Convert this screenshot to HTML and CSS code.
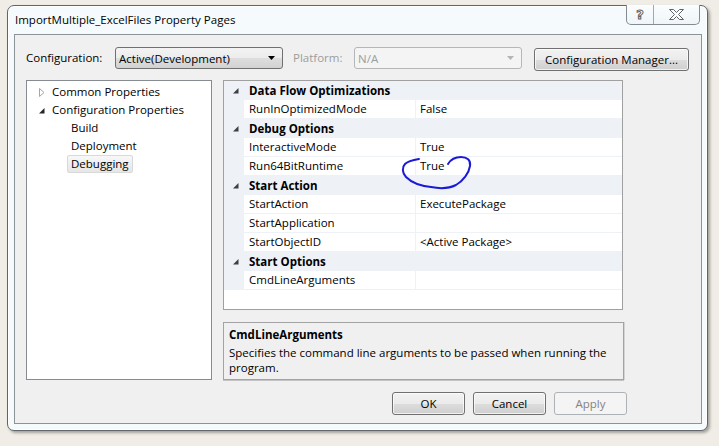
FILE: index.html
```html
<!DOCTYPE html>
<html lang="en">
<head>
<meta charset="utf-8">
<title>ImportMultiple_ExcelFiles Property Pages</title>
<link rel="stylesheet" href="styles.css">
</head>
<body>
<div class="window">
  <div class="titlebar">
    <span class="title">ImportMultiple_ExcelFiles Property Pages</span>
    <div class="caption-btns">
      <div class="cap cap-help"><span class="help-glyph">?</span></div>
      <div class="cap cap-close">
        <svg width="15" height="11" viewBox="0 0 15 11">
          <polygon points="0.5,0.5 4.5,0.5 7.5,3.5 10.5,0.5 14.5,0.5 9.5,5.5 14.5,10.5 10.5,10.5 7.5,7.5 4.5,10.5 0.5,10.5 5.5,5.5" fill="#fff" stroke="#5f6368" stroke-width="1"/>
        </svg>
      </div>
    </div>
  </div>

  <div class="client">
    <div class="toolbar">
      <span class="lbl lbl-config">Configuration:</span>
      <div class="combo">
        <span class="combo-text">Active(Development)</span>
        <svg class="combo-arrow" width="7" height="4" viewBox="0 0 7 4"><polygon points="0,0 7,0 3.5,4" fill="#000"/></svg>
      </div>
      <span class="lbl lbl-platform is-disabled">Platform:</span>
      <div class="combo is-disabled">
        <span class="combo-text">N/A</span>
        <svg class="combo-arrow" width="7" height="4" viewBox="0 0 7 4"><polygon points="0,0 7,0 3.5,4" fill="#b4b4b4"/></svg>
      </div>
      <button class="btn btn-cfgmgr">Configuration Manager...</button>
    </div>

    <div class="main">
      <div class="tree">
        <div class="tree-row">
          <svg class="twisty" width="6" height="9" viewBox="0 0 6 9"><polygon points="0.5,0.5 5,4.5 0.5,8.5" fill="#fff" stroke="#a6a6a6"/></svg>
          <span class="tree-label">Common Properties</span>
        </div>
        <div class="tree-row">
          <svg class="twisty" width="6" height="9" viewBox="0 0 6 9"><polygon points="5.5,2 5.5,7.5 0,7.5" fill="#262626"/></svg>
          <span class="tree-label">Configuration Properties</span>
        </div>
        <div class="tree-row child"><span class="tree-label">Build</span></div>
        <div class="tree-row child"><span class="tree-label">Deployment</span></div>
        <div class="tree-row child"><span class="tree-label is-selected">Debugging</span></div>
      </div>

      <div class="right-col">
        <div class="propgrid">
          <div class="cat-row"><svg class="cat-twisty" width="6" height="6" viewBox="0 0 6 6"><polygon points="5.5,0 5.5,5.5 0,5.5" fill="#3f3f3f"/></svg><span class="cat-name">Data Flow Optimizations</span></div>
          <div class="prop-row"><span class="gutter"></span><span class="pname">RunInOptimizedMode</span><span class="pval">False</span></div>

          <div class="cat-row"><svg class="cat-twisty" width="6" height="6" viewBox="0 0 6 6"><polygon points="5.5,0 5.5,5.5 0,5.5" fill="#3f3f3f"/></svg><span class="cat-name">Debug Options</span></div>
          <div class="prop-row"><span class="gutter"></span><span class="pname">InteractiveMode</span><span class="pval">True</span></div>
          <div class="prop-row"><span class="gutter"></span><span class="pname">Run64BitRuntime</span><span class="pval">True</span></div>

          <div class="cat-row"><svg class="cat-twisty" width="6" height="6" viewBox="0 0 6 6"><polygon points="5.5,0 5.5,5.5 0,5.5" fill="#3f3f3f"/></svg><span class="cat-name">Start Action</span></div>
          <div class="prop-row"><span class="gutter"></span><span class="pname">StartAction</span><span class="pval">ExecutePackage</span></div>
          <div class="prop-row"><span class="gutter"></span><span class="pname">StartApplication</span><span class="pval"></span></div>
          <div class="prop-row"><span class="gutter"></span><span class="pname">StartObjectID</span><span class="pval">&lt;Active Package&gt;</span></div>

          <div class="cat-row"><svg class="cat-twisty" width="6" height="6" viewBox="0 0 6 6"><polygon points="5.5,0 5.5,5.5 0,5.5" fill="#3f3f3f"/></svg><span class="cat-name">Start Options</span></div>
          <div class="prop-row"><span class="gutter"></span><span class="pname">CmdLineArguments</span><span class="pval"></span></div>

          <!-- pen mark drawn around the Run64BitRuntime value -->
          <svg class="ink" width="400" height="230" viewBox="0 0 400 230">
            <path d="M224,83 C227,78 232,76 237,76 C243,76 247,79 246,85 C245,92 239,100 232,104 C226,107 217,108 207,106 C197,105 187,101 182,96 C178,92 178,86 181,83 C184,80 189,79 195,78" fill="none" stroke="#1b1bd6" stroke-width="2" stroke-linecap="round" stroke-linejoin="round"/>
          </svg>
        </div>

        <div class="desc">
          <div class="desc-title">CmdLineArguments</div>
          <div class="desc-text">Specifies the command line arguments to be passed when running the program.</div>
        </div>
      </div>
    </div>

    <div class="footer">
      <button class="btn">OK</button>
      <button class="btn">Cancel</button>
      <button class="btn is-disabled">Apply</button>
    </div>
  </div>
</div>
</body>
</html>
```

FILE: styles.css
```css
html, body {
  margin: 0;
  padding: 0;
}

body {
  width: 719px;
  height: 446px;
  overflow: hidden;
  background: #f0ede6;
  font-family: "Open Sans", "Noto Sans", "DejaVu Sans", sans-serif;
  font-size: 11px;
  color: #000;
}

/* ---- window frame ---- */
.window {
  box-sizing: border-box;
  margin: 5px 0 0 7px;
  width: 701px;
  height: 426px;
  padding: 0 5px 6px 6px;
  border: 1px solid #62666b;
  border-radius: 7px;
  background: #f5fbfd;
  box-shadow: inset 0 0 0 1px #ffffff, 2px 2px 3px rgba(0, 0, 0, 0.32);
  display: flex;
  flex-direction: column;
}

.titlebar {
  height: 28px;
  display: flex;
  align-items: flex-start;
  flex-shrink: 0;
}

.title {
  margin-left: 1px;
  line-height: 28px;
  font-size: 11.5px;
  flex: 1;
}

.caption-btns {
  display: flex;
  margin-top: -1px;
  margin-right: 2px;
  height: 20px;
  box-sizing: border-box;
  border: 1px solid #868b90;
  border-top: none;
  border-radius: 0 0 5px 5px;
  background: linear-gradient(#fbfdfe, #eef5f8);
}

.cap {
  display: flex;
  align-items: center;
  justify-content: center;
  height: 100%;
}

.cap-help {
  width: 26px;
  border-right: 1px solid #a3a8ad;
}

.cap-close {
  width: 45px;
}

.help-glyph {
  font-family: "DejaVu Sans", sans-serif;
  font-weight: bold;
  font-size: 13px;
  line-height: 13px;
  color: #fff;
  -webkit-text-stroke: 1px #5f6368;
  margin-top: -1px;
}

/* ---- client area ---- */
.client {
  box-sizing: border-box;
  height: 390px;
  border: 1px solid #8e9398;
  background: #f0f0f0;
  padding: 12px 0 0 11px;
  display: flex;
  flex-direction: column;
}

.toolbar {
  display: flex;
  align-items: flex-start;
  height: 24px;
}

.lbl {
  line-height: 22px;
  font-size: 11.5px;
}

.lbl-config {
  width: 89px;
}

.lbl-platform {
  width: 61px;
  margin-left: 10px;
}

.is-disabled {
  color: #9d9d9d;
}

.combo {
  box-sizing: border-box;
  width: 168px;
  height: 22px;
  border: 1px solid #707070;
  border-radius: 3px;
  background: linear-gradient(#f3f3f3 0%, #ececec 50%, #dedede 51%, #d2d2d2 100%);
  display: flex;
  align-items: center;
  padding: 0 6px 0 3px;
}

.combo.is-disabled {
  border-color: #b3b7ba;
  background: #f4f4f4;
}

.combo-text {
  flex: 1;
  font-size: 11.5px;
}

.combo-arrow {
  display: block;
  margin-right: 1px;
}

.btn {
  box-sizing: border-box;
  height: 23px;
  width: 73px;
  padding: 0;
  border: 1px solid #707070;
  border-radius: 3px;
  background: linear-gradient(#f2f2f2 0%, #ebebeb 50%, #dddddd 51%, #cfcfcf 100%);
  box-shadow: inset 0 0 0 1px rgba(255, 255, 255, 0.7);
  font-family: inherit;
  font-size: 11.5px;
  color: #000;
}

.btn.is-disabled {
  border-color: #adb2b5;
  background: #f4f4f4;
  box-shadow: none;
  color: #838383;
}

.btn-cfgmgr {
  width: 155px;
  margin-left: 12px;
  margin-top: 1px;
}

/* ---- tree + grid ---- */
.main {
  display: flex;
  margin-top: 9px;
  height: 300px;
}

.tree {
  box-sizing: border-box;
  width: 186px;
  height: 300px;
  border: 1px solid #868a91;
  background: #fff;
  padding-top: 2px;
}

.tree-row {
  height: 18px;
  display: flex;
  align-items: center;
  padding-left: 12px;
  font-size: 11.5px;
}

.twisty {
  display: block;
  width: 6px;
  margin-right: 7px;
}

.tree-row.child {
  padding-left: 44px;
}

.tree-label {
  line-height: 16px;
}

.tree-label.is-selected {
  box-sizing: border-box;
  height: 18px;
  line-height: 16px;
  padding: 0 3px;
  margin-left: -4px;
  border: 1px solid #d9d9d9;
  border-radius: 2px;
  background: linear-gradient(#f8f8f8, #e6e6e6);
}

.right-col {
  margin-left: 11px;
  display: flex;
  flex-direction: column;
  width: 401px;
}

.propgrid {
  position: relative;
  box-sizing: border-box;
  width: 400px;
  height: 230px;
  border: 1px solid #a0a0a0;
  background: #fff;
  font-size: 11.5px;
}

.cat-row {
  height: 19px;
  background: #eef1f6;
  display: flex;
  align-items: center;
}

.cat-twisty {
  display: block;
  margin-left: 9px;
  margin-right: 10px;
}

.cat-name {
  font-weight: bold;
}

.prop-row {
  box-sizing: border-box;
  height: 19px;
  display: grid;
  grid-template-columns: 20px 171px 1px 1fr;
  border-bottom: 1px solid #eef1f6;
}

.gutter {
  background: #eef1f6;
}

.pname {
  padding-left: 5px;
  line-height: 18px;
  white-space: nowrap;
}

.pval {
  grid-column: 4;
  padding-left: 4px;
  line-height: 18px;
  white-space: nowrap;
}

.prop-row::after {
  content: "";
  grid-column: 3;
  grid-row: 1;
  background: #eef1f6;
}

.ink {
  position: absolute;
  left: 0;
  top: 0;
  pointer-events: none;
}

.desc {
  box-sizing: border-box;
  margin-top: 12px;
  height: 58px;
  border: 1px solid #a3a3a3;
  box-shadow: 0 1px 0 #c4c4c4, 1px 0 0 #d4d4d4;
  background: #f0f0f0;
  padding: 3px 5px 0 5px;
  font-size: 11.5px;
}

.desc-title {
  font-weight: bold;
  line-height: 17px;
}

.desc-text {
  margin-top: 2px;
  line-height: 15px;
}

/* ---- dialog buttons ---- */
.footer {
  display: flex;
  gap: 8px;
  margin-top: 12px;
  padding-left: 366px;
}
```
